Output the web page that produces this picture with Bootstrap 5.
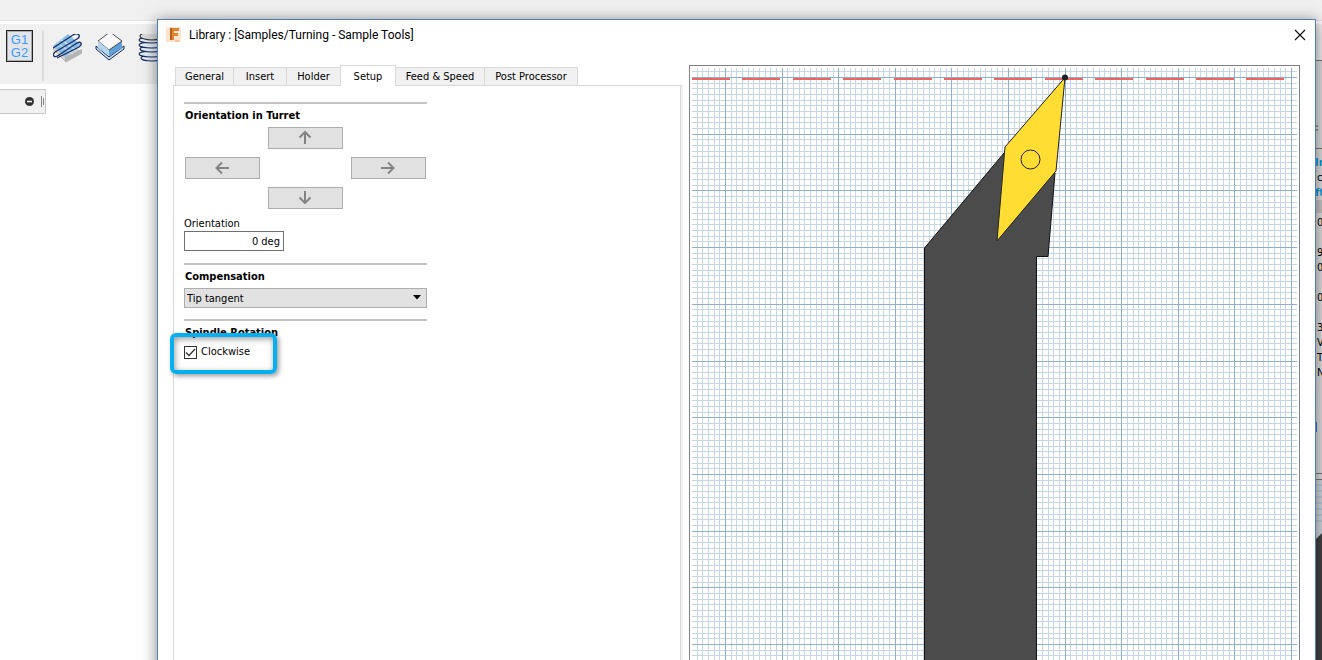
<!DOCTYPE html>
<html lang="en">
<head>
<meta charset="utf-8">
<meta name="viewport" content="width=device-width, initial-scale=1">
<title>Library</title>
<link rel="stylesheet" href="https://cdn.jsdelivr.net/npm/bootstrap@5.3.0/dist/css/bootstrap.min.css">
<style>
  body { height: 100vh; background: #fff; color: #000; font: 11px/14px "DejaVu Sans Condensed", "DejaVu Sans", sans-serif; }
  .app-title { height: 21px; background: #f0f0f0; border-bottom: 1px solid #e4e4e4; }
  .app-tools { height: 60px; margin-top: 3px; background: #f0f0f0; padding: 6px 0 0 6px; }
  .gcode { width: 27px; height: 32px; border: 1px solid #222; outline: 1px solid #aaa; outline-offset: -2px; background: #e1e5ea; color: #3f9bfb; font: 13px/13px "Liberation Sans", sans-serif; padding: 2px 0; border-radius: 0; }
  .tool-sep { width: 2px; height: 51px; background: #dcdcdc; margin: 0 9px; }
  .browser-bar { width: 46px; height: 25px; margin-top: 5px; background: #f0f0f0; border: 1px solid #c8c8c8; border-left: 0; }
  .side-panel { top: 60px; bottom: 0; right: 0; width: 7px; background: #dedede; }
  .side-rows { padding-top: 95px; }
  .side-row { height: 15px; padding-left: 2px; line-height: 15px; }
  .side-link { color: #0a9bd8; font-weight: bold; }
  .dialog-win { top: 19px; bottom: -20px; left: 157px; right: 6px; background: #fff; border: 1px solid #4f7fba; box-shadow: 0 2px 14px rgba(0,0,0,.5); }
  .dialog-title { height: 29px; padding: 0 9px 0 8px; font: 12px/16px Roboto, sans-serif; }
  .dialog-body { padding: 16px 15px 0; gap: 8px; }
  .setup-pane { width: 508px; }
  .tab-strip { height: 20px; padding-left: 2px; }
  .tab-strip .tab-btn { height: 18px; padding: 1px 0 0; border: 1px solid #d9d9d9; border-bottom: 0; margin-right: -1px; background: #f0f0f0; text-align: center; color: #000; }
  .tab-strip .tab-btn.active { height: 21px; margin-bottom: -1px; background: #fff; z-index: 1; position: relative; }
  .tab-page { border: 1px solid #d9d9d9; box-shadow: 2px 0 0 #f0f0f0; padding: 16px 10px; }
  .form-col { width: 243px; }
  .sect { border-top: 2px solid #c4c4c4; padding: 4px 0 0 1px; font-weight: bold; line-height: 16px; margin: 0; font-size: 11px; }
  .sect-next { margin-top: 12px; }
  .sect-last { margin-top: 11px; }
  .pad-grid { display: grid; grid-template-columns: 75px 75px 75px; gap: 8px; justify-content: space-between; padding: 0 1px; margin-top: 3px; }
  .arrow-btn { height: 22px; border: 1px solid #adadad; background: #e1e1e1; padding: 0 2px 2px 0; display: flex; align-items: center; justify-content: center; }
  .num-box { width: 100px; height: 20px; border: 1px solid #707070; text-align: right; padding: 1px 3px 0; }
  .combo { height: 20px; width: 100%; border: 1px solid #adadad; background: #e1e1e1; appearance: none; padding: 1px 2px 0; }
  .combo-wrap { margin-top: 3px; }
  .combo-arrow { right: 6px; top: 7px; pointer-events: none; }
  .tick-row { margin-top: 4px; }
  .tick { appearance: none; width: 13px; height: 13px; border: 1px solid #333; margin: 0; background: #fff url("data:image/svg+xml,%3Csvg xmlns='http://www.w3.org/2000/svg' viewBox='0 0 11 11'%3E%3Cpath d='M1 5.500l3 3 6-6.500' fill='none' stroke='%23333' stroke-width='1.300'/%3E%3C/svg%3E"); }
  .callout { left: -14px; top: -12px; width: 107px; height: 41px; border: 4px solid #06b0f0; border-radius: 6px; box-shadow: 2px 2px 5px rgba(0,0,0,.4), inset 1px 2px 6px rgba(0,0,0,.4); pointer-events: none; }
  .preview { border: 1px solid #828088; padding: 2px; min-width: 0; }
</style>
</head>
<body class="position-relative overflow-hidden">
<div class="app-title"></div>
<div class="app-tools d-flex align-items-start">
  <button class="gcode" type="button">G1<br>G2</button>
  <div class="tool-sep"></div>
  <svg class="mt-1" width="112" height="36" viewBox="54 34 112 36" aria-hidden="true">
    <g stroke-linejoin="round">
      <path d="M54 49l12-8 17 12-16 9z" fill="#d0d0d0" stroke="#999" stroke-width=".6"/>
      <path d="M54 46l15-12 13 11-16 12z" fill="#8abde6"/><path d="M66 57v5l17-9v-4z" fill="#b4b4b4"/>
      <path d="M57 42l17 12M61 39l17 12" stroke="#c6def2" stroke-width="1.500"/>
      <path d="M54 48l20-13c5-3 9 1 4 4L56 52c-4 4 0 6 4 3l18-12c4-2 6 1 2 4L58 58" fill="none" stroke="#182d61" stroke-width="1.300"/>
      <path d="M97 46l13 11 15-11v3l-15 11-13-11z" fill="#c8d8e6" stroke="#182d61"/>
      <path d="M110 50l13-9v7l-13 8z" fill="#5f9fd8"/>
      <path d="M99 41l12-9 12 9-13 9z" fill="#f8f8f8" stroke="#222" stroke-width=".8"/><path d="M99 41l11 9v6l-11-8z" fill="#b5d5ee"/>
      <g fill="#e4edf4" stroke="#182d61" stroke-width="1.100"><ellipse cx="153" cy="58" rx="11" ry="3"/><ellipse cx="153" cy="54" rx="13" ry="3"/><ellipse cx="153" cy="49" rx="12" ry="3"/><ellipse cx="153" cy="45" rx="13" ry="3"/><ellipse cx="153" cy="40" rx="13" ry="3"/><ellipse cx="153" cy="36" rx="12" ry="4" fill="#ddd" stroke="#333"/></g>
    </g>
  </svg>
</div>
<div class="browser-bar d-flex align-items-center justify-content-end">
  <svg width="20" height="12" aria-hidden="true"><circle cx="4.500" cy="5.500" r="4.500" fill="#333"/><path d="M2 5.500h5" stroke="#fff" stroke-width="1.500"/><path d="M16.500 0v11M18.500 2v7" stroke="#888"/></svg>
</div>
<aside class="side-panel position-absolute overflow-hidden">
  <svg class="position-absolute top-0 start-0" width="7" height="600" aria-hidden="true">
    <path d="M0 .5h7M0 88.500h7M0 413.500h7M0 419.500h7" stroke="#777"/><path d="M0 140h7v13H0z" fill="#c4c4c4"/>
    <path d="M1 65h2v2H1zM1 69h2v2H1z" fill="#999"/>
    <path d="M0 362h2v10H0z" fill="#3a7fd0"/><path d="M0 420h7v60H0z" fill="#cfd8df"/><path d="M0 425h7M0 431h7M0 437h7M0 443h7M0 449h7M0 455h7M0 461h7" stroke="#a6b9c8"/><path d="M0 480l7-7v127H0z" fill="#424242"/>
  </svg>
  <div class="side-rows position-relative">
    <div class="side-row side-link ps-0">In</div><div class="side-row">c</div><div class="side-row side-link ps-0">ft</div>
    <div class="side-row"></div><div class="side-row">0</div><div class="side-row"></div><div class="side-row">9</div><div class="side-row">0</div><div class="side-row"></div><div class="side-row">0</div><div class="side-row"></div><div class="side-row">3</div><div class="side-row">V</div><div class="side-row">T</div><div class="side-row">N</div>
  </div>
</aside>
<main class="dialog-win position-absolute d-flex flex-column">
  <header class="dialog-title d-flex align-items-center">
    <svg width="15" height="15" aria-hidden="true"><path d="M0 0h15v15H0z" fill="#fde3cd"/><path d="M4 1h9v3H8v2h4v3H8v4H4z" fill="#dd8430"/><path d="M4 1h2v12H4z" fill="#b75f1c"/><path d="M9 14h4" stroke="#f0a060"/></svg>
    <span class="ps-2 flex-grow-1 text-nowrap">Library : [Samples/Turning - Sample Tools]</span>
    <button type="button" class="border-0 bg-transparent p-0 d-flex" aria-label="Close"><svg width="12" height="12"><path d="M1 1l10 10M11 1L1 11" stroke="#111" stroke-width="1.200"/></svg></button>
  </header>
  <div class="dialog-body d-flex flex-grow-1">
    <section class="setup-pane d-flex flex-column flex-shrink-0">
      <div class="tab-strip d-flex align-items-end" role="tablist">
        <button type="button" role="tab" class="tab-btn" style="width:59px">General</button>
        <button type="button" role="tab" class="tab-btn" style="width:54px">Insert</button>
        <button type="button" role="tab" class="tab-btn" style="width:55px">Holder</button>
        <button type="button" role="tab" class="tab-btn active" style="width:56px">Setup</button>
        <button type="button" role="tab" class="tab-btn" style="width:90px">Feed &amp; Speed</button>
        <button type="button" role="tab" class="tab-btn" style="width:94px">Post Processor</button>
      </div>
      <div class="tab-page flex-grow-1">
        <div class="form-col">
          <h2 class="sect">Orientation in Turret</h2>
          <div class="pad-grid">
            <span></span><button type="button" class="arrow-btn" aria-label="Up"><svg width="14" height="14" fill="none" stroke="#838383" stroke-width="2"><path d="M7 14V2M1.500 7.500L7 2 12.500 7.500"/></svg></button><span></span>
            <button type="button" class="arrow-btn" aria-label="Left"><svg width="14" height="14" fill="none" stroke="#838383" stroke-width="2"><path d="M14 8H2M7 2.500L1.500 8 7 13.500"/></svg></button><span></span><button type="button" class="arrow-btn" aria-label="Right"><svg width="14" height="14" fill="none" stroke="#838383" stroke-width="2"><path d="M0 8h12M7 2.500L12.500 8 7 13.500"/></svg></button>
            <span></span><button type="button" class="arrow-btn" aria-label="Down"><svg width="14" height="14" fill="none" stroke="#838383" stroke-width="2"><path d="M7 1v12M1.500 7.500L7 13 12.500 7.500"/></svg></button><span></span>
          </div>
          <label for="ori" class="d-block mt-2">Orientation</label>
          <input id="ori" class="num-box d-block" value="0 deg">
          <h2 class="sect sect-next">Compensation</h2>
          <div class="combo-wrap position-relative">
            <select class="combo d-block" aria-label="Compensation"><option>Tip tangent</option></select>
            <svg class="combo-arrow position-absolute" width="8" height="5"><path d="M0 0h8L4 4.500z"/></svg>
          </div>
          <h2 class="sect sect-last">Spindle Rotation</h2>
          <div class="tick-row position-relative d-flex align-items-center">
            <input id="cw" type="checkbox" class="tick" checked><label for="cw" class="ms-1">Clockwise</label>
            <div class="callout position-absolute"></div>
          </div>
        </div>
      </div>
    </section>
    <section class="preview flex-grow-1 d-flex">
      <svg id="view" width="100%" height="100%">
        <g shape-rendering="crispEdges"><path id="minor" stroke="#c5d6e6"/><path id="major" stroke="#8fb0cc"/>
        <path d="M0 11h592" stroke="#ed6461" stroke-width="2" stroke-dasharray="38 12.400"/></g>
        <path d="M232.500 180L312 85l51 20-7 83.500H344.500V640H232.500z" fill="#4b4b4b" stroke="#111"/>
        <path d="M373 9.500L313 79l-8 94 59-70z" fill="#ffdd33" stroke="#222"/>
        <circle cx="338.500" cy="91.500" r="9.500" fill="none" stroke="#222"/><circle cx="373" cy="9.500" r="3" fill="#1c2026"/>
      </svg>
    </section>
  </div>
</main>
<script src="https://cdn.jsdelivr.net/npm/bootstrap@5.3.0/dist/js/bootstrap.bundle.min.js"></script>
<script>
  // Graph paper: a fine line every tenth of a major square
  const view = document.getElementById('view'), size = view.getBoundingClientRect();
  const paths = { minor: '', major: '' };
  const kind = n => n % 10 === 0 ? 'major' : 'minor';
  for (let i = -5; 33 + i * 5.66 < size.width; i++) paths[kind(i)] += `M${Math.floor(33.5 + i * 5.66) + .5} 0V${size.height}`;
  for (let j = -1; 9 + j * 5.67 < size.height; j++) paths[kind(j)] += `M0 ${Math.floor(9.5 + j * 5.67) + .5}H${size.width}`;
  for (const k in paths) document.getElementById(k).setAttribute('d', paths[k]);
</script>
</body>
</html>
